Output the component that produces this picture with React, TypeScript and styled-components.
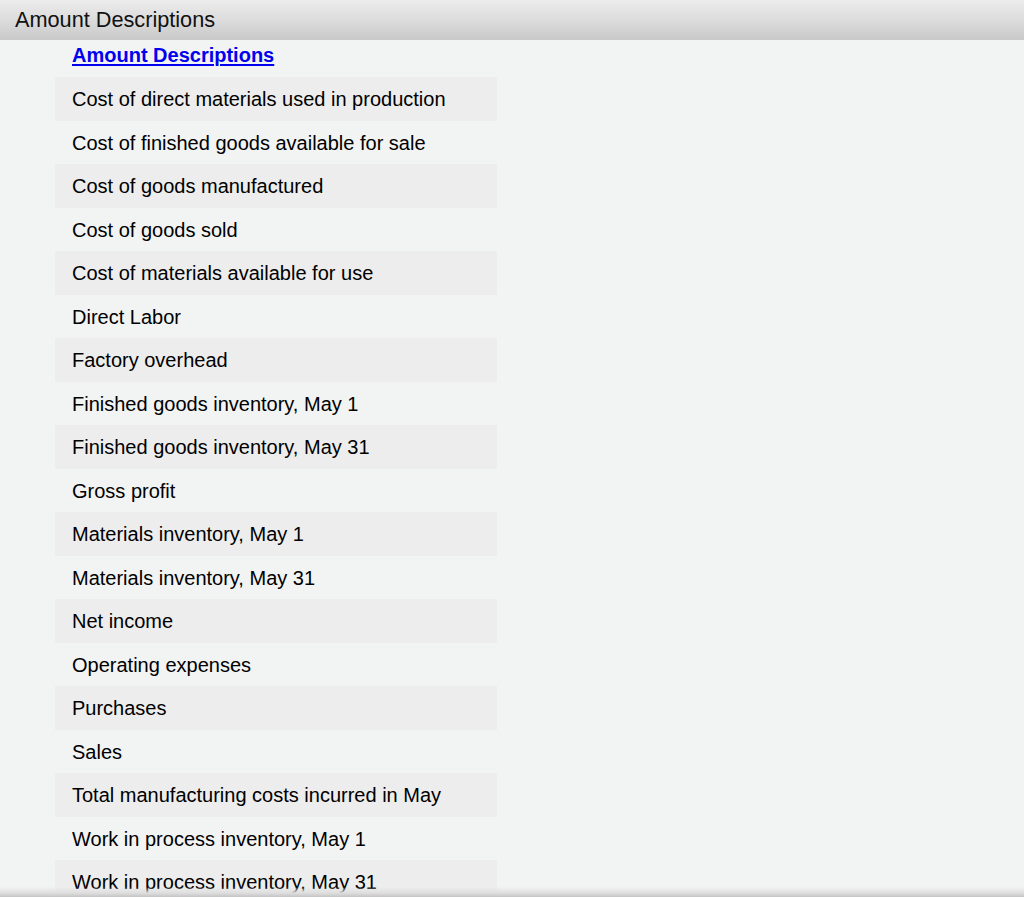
import styled, { createGlobalStyle } from "styled-components";

const GlobalStyle = createGlobalStyle`
    html, body {
        margin: 0;
        padding: 0;
        background: #f2f3f3;
    }
    body {
        font-family: "Liberation Sans", Arial, Helvetica, sans-serif;
        color: #000;
    }
`;

const Page = styled.div`
    position: relative;
    height: 897px;
    display: flex;
    flex-direction: column;
    overflow: hidden;
    background: #f2f3f3;
`;

const TitleBar = styled.div`
    flex: 0 0 40px;
    display: flex;
    align-items: center;
    padding-left: 15px;
    background: linear-gradient(to bottom, #ececec 0%, #dcdcdc 50%, #c9c9c9 100%);
    font-size: 21.7px;
    color: #111;
`;

const Body = styled.div`
    flex: 1;
    overflow: hidden;
    padding: 4px 0 0 55px;
`;

const HeadingLink = styled.a`
    display: block;
    margin-left: 17px;
    height: 33px;
    line-height: 23px;
    font-size: 20px;
    font-weight: bold;
    color: #0000ee;
    text-decoration: underline;
    text-underline-offset: 2px;
`;

const List = styled.ul`
    list-style: none;
    margin: 0;
    padding: 0;
    width: 442px;
`;

const Row = styled.li<{ $shaded: boolean }>`
    box-sizing: border-box;
    height: 43.5px;
    display: flex;
    align-items: center;
    padding: 2px 0 0 17px;
    font-size: 20px;
    background: ${(p) => (p.$shaded ? "#ededed" : "transparent")};
`;

const BottomShade = styled.div`
    position: absolute;
    left: 0;
    right: 0;
    bottom: 0;
    height: 10px;
    background: linear-gradient(to bottom, rgba(242, 243, 243, 0) 0%, #dedede 60%, #c4c4c4 100%);
`;

const descriptions = [
    "Cost of direct materials used in production",
    "Cost of finished goods available for sale",
    "Cost of goods manufactured",
    "Cost of goods sold",
    "Cost of materials available for use",
    "Direct Labor",
    "Factory overhead",
    "Finished goods inventory, May 1",
    "Finished goods inventory, May 31",
    "Gross profit",
    "Materials inventory, May 1",
    "Materials inventory, May 31",
    "Net income",
    "Operating expenses",
    "Purchases",
    "Sales",
    "Total manufacturing costs incurred in May",
    "Work in process inventory, May 1",
    "Work in process inventory, May 31",
];

const App = () => {
    return (
        <>
            <GlobalStyle />
            <Page>
                <TitleBar>Amount Descriptions</TitleBar>
                <Body>
                    <HeadingLink href="#">Amount Descriptions</HeadingLink>
                    <List>
                        {descriptions.map((d, i) => (
                            <Row key={d} $shaded={i % 2 === 0}>{d}</Row>
                        ))}
                    </List>
                </Body>
                <BottomShade />
            </Page>
        </>
    );
};

export default App;
